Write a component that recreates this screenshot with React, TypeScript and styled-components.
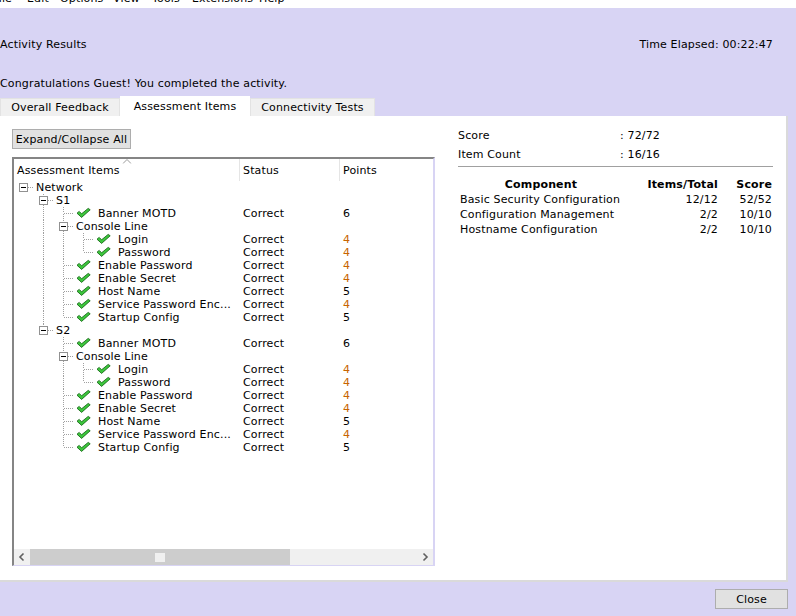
import React from "react";
import styled, { createGlobalStyle } from "styled-components";

const GlobalStyle = createGlobalStyle`
  html, body {
    margin: 0;
    padding: 0;
  }
  body {
    font-family: "DejaVu Sans", Verdana, sans-serif;
    font-size: 11px;
    letter-spacing: 0.15px;
    color: #000000;
  }
`;

const Window = styled.div`
  width: 796px;
  height: 616px;
  overflow: hidden;
  background-color: #d8d4f4;
  display: flex;
  flex-direction: column;
`;

const MenuBar = styled.div`
  height: 8px;
  flex: none;
  background-color: #ffffff;
  overflow: hidden;
`;

const MenuList = styled.div`
  display: grid;
  grid-template-columns: 34px 33px 53px 39px 40px 67px auto;
  margin: -9px 0 0 -7px;
  line-height: 16px;
  white-space: nowrap;
`;

const TitleRow = styled.div`
  display: flex;
  justify-content: space-between;
  margin-top: 30px;
  padding-right: 23px;
  line-height: 13px;
`;

const Message = styled.div`
  margin-top: 26px;
  line-height: 13px;
`;

const TabBar = styled.div`
  display: flex;
  align-items: flex-end;
  height: 20px;
  margin-top: 6px;
`;

const Tab = styled.div<{ $active?: boolean; $width: number }>`
  box-sizing: border-box;
  width: ${(p) => p.$width}px;
  height: ${(p) => (p.$active ? 20 : 18)}px;
  padding-top: ${(p) => (p.$active ? 0 : 1)}px;
  line-height: ${(p) => (p.$active ? 20 : 16)}px;
  text-align: center;
  white-space: nowrap;
  background-color: ${(p) => (p.$active ? "#ffffff" : "#f0f0f0")};
  border: 1px solid ${(p) => (p.$active ? "#ffffff" : "#e3e3e3")};
  border-bottom: none;
`;

const Panel = styled.div`
  box-sizing: border-box;
  width: 788px;
  height: 466px;
  flex: none;
  display: flex;
  padding-left: 12px;
  background-color: #ffffff;
  border-right: 2px solid #dadada;
  border-bottom: 2px solid #dadada;
`;

const LeftColumn = styled.div`
  width: 423px;
  padding-top: 13px;
  display: flex;
  flex-direction: column;
  align-items: flex-start;
  gap: 8px;
`;

const Button = styled.button<{ $width?: number }>`
  box-sizing: border-box;
  height: 20px;
  width: ${(p) => (p.$width ? `${p.$width}px` : "auto")};
  padding: 0 2px;
  font-family: inherit;
  font-size: 11px;
  letter-spacing: 0.15px;
  color: #000000;
  background-color: #e1e1e1;
  border: 1px solid #adadad;
  border-radius: 0;
  white-space: nowrap;
`;

const TreeBox = styled.div`
  box-sizing: border-box;
  width: 423px;
  height: 409px;
  display: flex;
  flex-direction: column;
  border-style: solid;
  border-width: 2px 2px 1px 2px;
  border-color: #858585 #d8d4f4 #d8d4f4 #858585;
  overflow: hidden;
`;

const ColumnGrid = styled.div`
  display: grid;
  grid-template-columns: 225px 100px 1fr;
`;

const HeaderRow = styled(ColumnGrid)`
  height: 22px;
  flex: none;
`;

const HeaderCell = styled.div<{ $divider?: boolean }>`
  position: relative;
  padding: 5px 0 0 3px;
  line-height: 13px;
  border-left: ${(p) => (p.$divider ? "1px solid #e5e5e5" : "none")};
  white-space: nowrap;
`;

const SortArrow = styled.svg`
  position: absolute;
  top: 0;
  left: 50%;
  transform: translateX(-50%);
`;

const TreeBody = styled.div`
  flex: 1;
  overflow: hidden;
`;

const TreeRow = styled(ColumnGrid)`
  height: 13px;
  line-height: 13px;
  white-space: nowrap;
`;

const NameCell = styled.div`
  display: flex;
  align-items: center;
  overflow: hidden;
`;

const NameText = styled.span`
  display: flex;
  align-items: center;
  padding-left: 2px;
`;

const CheckIcon = styled.svg`
  flex: none;
  margin-right: 6px;
`;

const ValueCell = styled.div<{ $tone?: "warn" }>`
  padding-left: 4px;
  color: ${(p) => (p.$tone === "warn" ? "#c86400" : "#000000")};
`;

const ScrollBar = styled.div`
  height: 16px;
  flex: none;
  display: flex;
  background-color: #f0f0f0;
`;

const ScrollArrow = styled.svg`
  flex: none;
`;

const ScrollTrack = styled.div`
  flex: 1;
  display: flex;
`;

const ScrollThumb = styled.div<{ $width: number }>`
  width: ${(p) => p.$width}px;
  display: flex;
  align-items: center;
  justify-content: center;
  background-color: #cdcdcd;
`;

const Grip = styled.div`
  width: 10px;
  height: 9px;
  background-color: #f0f0f0;
`;

const RightColumn = styled.div`
  width: 316px;
  margin-left: 23px;
  padding-top: 10px;
`;

const InfoRow = styled.div`
  display: grid;
  grid-template-columns: 162px 1fr;
  line-height: 19px;
`;

const Separator = styled.div`
  height: 1px;
  width: 315px;
  margin-top: 2px;
  background-color: #a0a0a0;
`;

const ScoreTable = styled.div`
  display: grid;
  grid-template-columns: 166px 96px 54px;
  margin-top: 10px;
  line-height: 15px;
`;

const TableCell = styled.div<{ $align?: "center" | "right"; $bold?: boolean }>`
  text-align: ${(p) => p.$align ?? "left"};
  font-weight: ${(p) => (p.$bold ? "bold" : "normal")};
  padding: ${(p) => (p.$align === "right" ? "0 2px 0 0" : p.$align === "center" ? "0" : "0 0 0 2px")};
  white-space: nowrap;
`;

const Footer = styled.div`
  display: flex;
  justify-content: flex-end;
  padding: 7px 8px 0 0;
`;

type TreeNode = {
  label: string;
  points?: number;
  children?: TreeNode[];
};

type FlatRow = {
  node: TreeNode;
  level: number;
  guides: boolean[];
  hasPrev: boolean;
  hasNext: boolean;
};

const switchItems = (): TreeNode[] => [
  { label: "Banner MOTD", points: 6 },
  {
    label: "Console Line",
    children: [
      { label: "Login", points: 4 },
      { label: "Password", points: 4 },
    ],
  },
  { label: "Enable Password", points: 4 },
  { label: "Enable Secret", points: 4 },
  { label: "Host Name", points: 5 },
  { label: "Service Password Enc...", points: 4 },
  { label: "Startup Config", points: 5 },
];

const tree: TreeNode[] = [
  {
    label: "Network",
    children: [
      { label: "S1", children: switchItems() },
      { label: "S2", children: switchItems() },
    ],
  },
];

const flatten = (nodes: TreeNode[], level: number, guides: boolean[], out: FlatRow[]) => {
  nodes.forEach((node, i) => {
    const hasNext = i < nodes.length - 1;
    out.push({ node, level, guides, hasPrev: i > 0 || level > 0, hasNext });
    if (node.children) flatten(node.children, level + 1, [...guides, hasNext], out);
  });
  return out;
};

const rows = flatten(tree, 0, [], []);

const components = [
  { name: "Basic Security Configuration", items: "12/12", score: "52/52" },
  { name: "Configuration Management", items: "2/2", score: "10/10" },
  { name: "Hostname Configuration", items: "2/2", score: "10/10" },
];

const DOTS = { stroke: "#a0a0a0", strokeWidth: 1, strokeDasharray: "1 1" };

const GuideCell = ({ line }: { line: boolean }) => (
  <svg width={20} height={13} style={{ flex: "none" }} shapeRendering="crispEdges">
    {line && <line x1={9.5} y1={0} x2={9.5} y2={13} {...DOTS} />}
  </svg>
);

const BranchCell = ({ top, bottom, box }: { top: boolean; bottom: boolean; box: boolean }) => (
  <svg width={20} height={13} style={{ flex: "none" }} shapeRendering="crispEdges">
    {top && <line x1={9.5} y1={0} x2={9.5} y2={6} {...DOTS} />}
    {bottom && <line x1={9.5} y1={7} x2={9.5} y2={13} {...DOTS} />}
    <line x1={10} y1={6.5} x2={20} y2={6.5} {...DOTS} />
    {box && (
      <>
        <rect x={5.5} y={2.5} width={8} height={8} fill="#ffffff" stroke="#919191" />
        <line x1={7} y1={6.5} x2={12} y2={6.5} stroke="#000000" />
      </>
    )}
  </svg>
);

const Check = () => (
  <CheckIcon width={16} height={13} viewBox="0 0 16 13">
    <path
      d="M1 6.2 L3.2 4.4 L5.6 6.8 L12.2 1.4 L14.2 2.8 L5.6 10.4 Z"
      fill="#3cc83c"
      stroke="#1a6a1a"
      strokeWidth={0.9}
      strokeLinejoin="round"
    />
  </CheckIcon>
);

const TreeLine = ({ row }: { row: FlatRow }) => {
  const { node, guides, hasPrev, hasNext } = row;
  const isLeaf = !node.children;
  return (
    <TreeRow>
      <NameCell>
        {guides.map((g, k) => (
          <GuideCell key={k} line={g} />
        ))}
        <BranchCell top={hasPrev} bottom={hasNext} box={!isLeaf} />
        <NameText>
          {isLeaf && <Check />}
          {node.label}
        </NameText>
      </NameCell>
      <ValueCell>{isLeaf ? "Correct" : ""}</ValueCell>
      <ValueCell $tone={node.points === 4 ? "warn" : undefined}>{node.points ?? ""}</ValueCell>
    </TreeRow>
  );
};

const App = () => {
  return (
    <Window>
      <GlobalStyle />
      <MenuBar>
        <MenuList>
          <span>File</span>
          <span>Edit</span>
          <span>Options</span>
          <span>View</span>
          <span>Tools</span>
          <span>Extensions</span>
          <span>Help</span>
        </MenuList>
      </MenuBar>

      <TitleRow>
        <span>Activity Results</span>
        <span>Time Elapsed: 00:22:47</span>
      </TitleRow>
      <Message>Congratulations Guest! You completed the activity.</Message>

      <TabBar>
        <Tab $width={120}>Overall Feedback</Tab>
        <Tab $width={130} $active>
          Assessment Items
        </Tab>
        <Tab $width={125}>Connectivity Tests</Tab>
      </TabBar>

      <Panel>
        <LeftColumn>
          <Button $width={119}>Expand/Collapse All</Button>
          <TreeBox>
            <HeaderRow>
              <HeaderCell>
                <SortArrow width={9} height={5} viewBox="0 0 9 5">
                  <polyline points="0.5,4.5 4.5,0.5 8.5,4.5" fill="none" stroke="#9a9a9a" strokeWidth={1} />
                </SortArrow>
                Assessment Items
              </HeaderCell>
              <HeaderCell $divider>Status</HeaderCell>
              <HeaderCell $divider>Points</HeaderCell>
            </HeaderRow>
            <TreeBody>
              {rows.map((row, i) => (
                <TreeLine key={i} row={row} />
              ))}
            </TreeBody>
            <ScrollBar>
              <ScrollArrow width={16} height={16} viewBox="0 0 16 16">
                <polyline points="9.5,4.5 6,8 9.5,11.5" fill="none" stroke="#606060" strokeWidth={1.6} />
              </ScrollArrow>
              <ScrollTrack>
                <ScrollThumb $width={260}>
                  <Grip />
                </ScrollThumb>
              </ScrollTrack>
              <ScrollArrow width={16} height={16} viewBox="0 0 16 16">
                <polyline points="6.5,4.5 10,8 6.5,11.5" fill="none" stroke="#606060" strokeWidth={1.6} />
              </ScrollArrow>
            </ScrollBar>
          </TreeBox>
        </LeftColumn>

        <RightColumn>
          <InfoRow>
            <span>Score</span>
            <span>: 72/72</span>
          </InfoRow>
          <InfoRow>
            <span>Item Count</span>
            <span>: 16/16</span>
          </InfoRow>
          <Separator />
          <ScoreTable>
            <TableCell $align="center" $bold>
              Component
            </TableCell>
            <TableCell $align="right" $bold>
              Items/Total
            </TableCell>
            <TableCell $align="right" $bold>
              Score
            </TableCell>
            {components.map((c) => (
              <React.Fragment key={c.name}>
                <TableCell>{c.name}</TableCell>
                <TableCell $align="right">{c.items}</TableCell>
                <TableCell $align="right">{c.score}</TableCell>
              </React.Fragment>
            ))}
          </ScoreTable>
        </RightColumn>
      </Panel>

      <Footer>
        <Button $width={73}>Close</Button>
      </Footer>
    </Window>
  );
};

export default App;
